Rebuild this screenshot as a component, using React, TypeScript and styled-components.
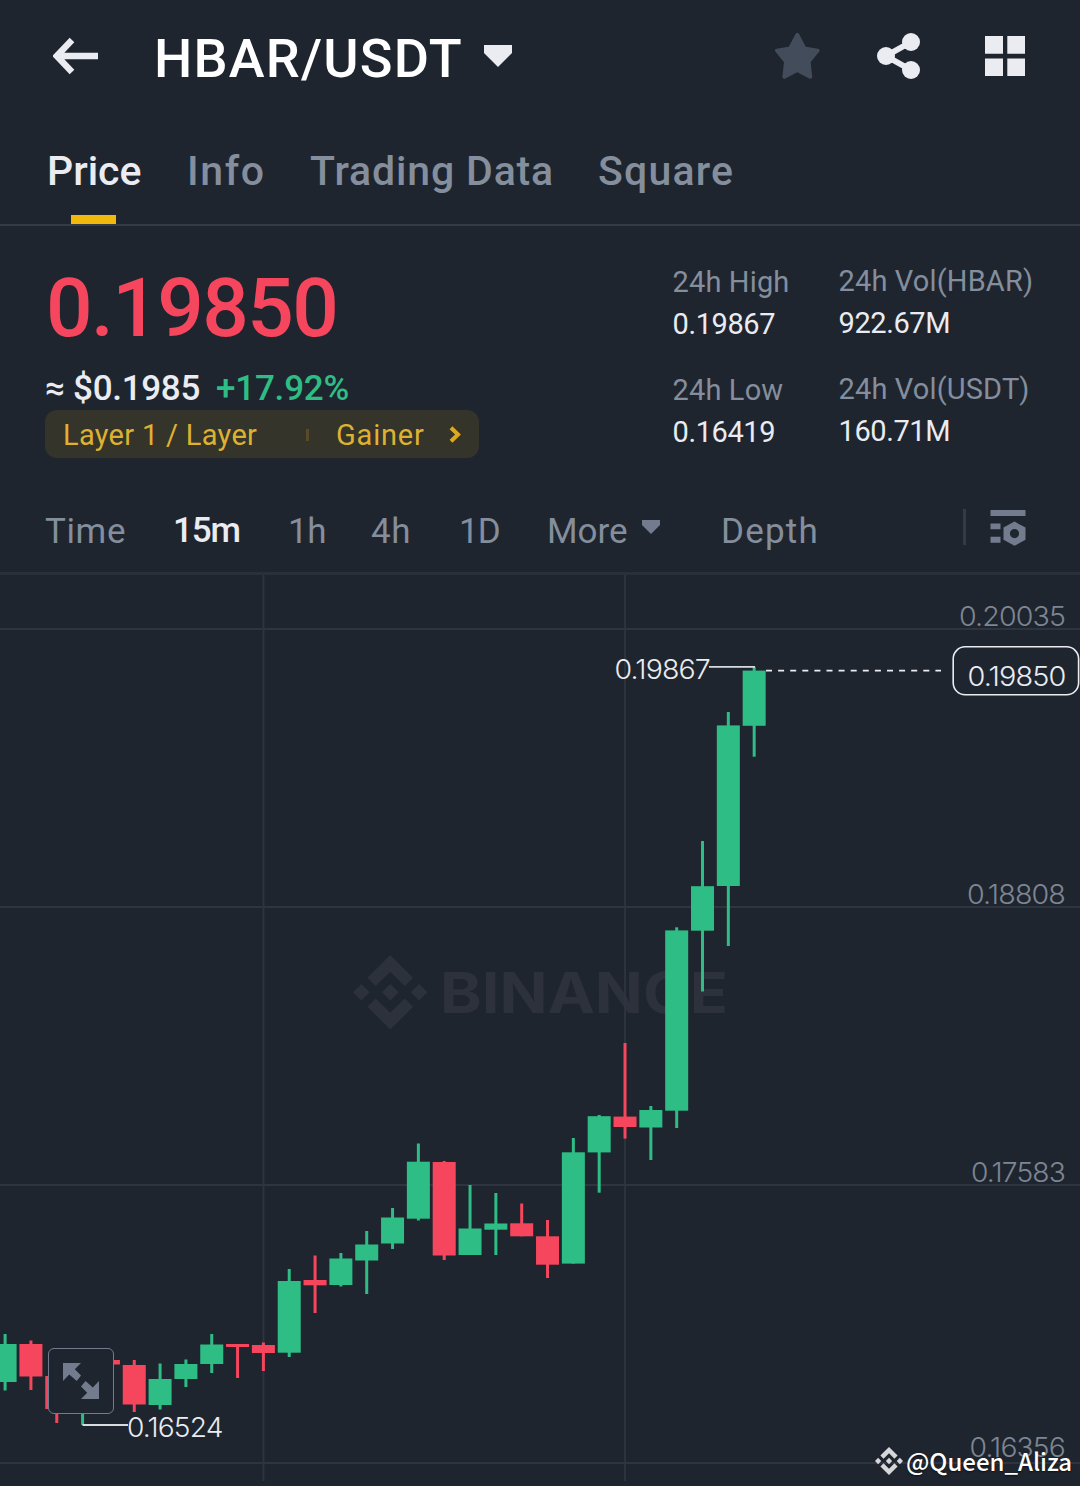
import React from "react";
import styled, { createGlobalStyle } from "styled-components";

const color = {
  bg: "#1f252f",
  line: "#333b47",
  grid: "#2e3541",
  text: "#eaecf1",
  muted: "#848e9c",
  icon: "#727c8e",
  up: "#2ebd85",
  down: "#f6465d",
  gold: "#f0b90b",
};

const Global = createGlobalStyle`
  * { box-sizing: border-box; }
  body {
    margin: 0;
    background: ${color.bg};
    font-family: Roboto, "Liberation Sans", sans-serif;
    -webkit-font-smoothing: antialiased;
  }
  svg { display: block; }
`;

const Page = styled.main`
  width: 1080px;
  height: 1486px;
  overflow: hidden;
  background: ${color.bg};
  color: ${color.text};
  white-space: nowrap;
`;

const Header = styled.header`
  display: flex;
  align-items: center;
  height: 112px;
  padding: 0 55px 0 53px;
`;

const Title = styled.h1`
  margin: 0 0 0 56px;
  padding-top: 5px;
  width: 330px;
  font-size: 54px;
  line-height: 64px;
  font-weight: 500;
  letter-spacing: 1.2px;
  color: #fff;
`;

const Actions = styled.div`
  display: flex;
  align-items: center;
  margin-left: auto;
`;

const ActionIcon = styled.span<{ $gap: number }>`
  margin-left: ${(p) => p.$gap}px;
`;

const Tabs = styled.nav`
  display: grid;
  grid-template-columns: 140px 123px 288px auto;
  height: 114px;
  padding: 35px 0 0 47px;
  border-bottom: 2px solid ${color.line};
`;

const Tab = styled.div<{ $active?: boolean; $spacing: number }>`
  font-size: 41px;
  line-height: 48px;
  font-weight: 500;
  letter-spacing: ${(p) => p.$spacing}px;
  color: ${(p) => (p.$active ? color.text : color.muted)};
`;

const Underline = styled.div`
  width: 45px;
  height: 9px;
  margin: 20px 0 0 24px;
  background: ${color.gold};
`;

const Summary = styled.section`
  display: grid;
  grid-template-columns: 627.5px 166px auto;
  height: 262px;
  padding-left: 45px;
`;

const PriceColumn = styled.div`
  padding-top: 40px;
`;

const Price = styled.div`
  padding-left: 1px;
  font-size: 82px;
  line-height: 84px;
  font-weight: 500;
  letter-spacing: -1.6px;
  color: ${color.down};
`;

const Conversion = styled.div`
  display: flex;
  gap: 17px;
  margin-top: 19px;
  font-size: 35px;
  line-height: 40px;
  font-weight: 500;
`;

const Fiat = styled.span`
  width: 154px;
  letter-spacing: -0.3px;
`;

const Change = styled.span`
  color: ${color.up};
  letter-spacing: -0.2px;
`;

const Chip = styled.div`
  display: flex;
  align-items: center;
  width: 434px;
  height: 48px;
  margin-top: 1px;
  padding: 1px 18px 0;
  border-radius: 12px;
  background: #35342b;
  color: #dfb131;
  font-size: 29px;
  line-height: 46px;
`;

const ChipCategory = styled.span`
  width: 243px;
  letter-spacing: 0.3px;
`;

const ChipDivider = styled.i`
  width: 3px;
  height: 12px;
  background: #594b2a;
`;

const ChipTag = styled.span`
  width: 114px;
  padding-left: 27px;
  letter-spacing: 0.8px;
`;

const StatColumn = styled.dl<{ $top: number }>`
  display: flex;
  flex-direction: column;
  gap: 24px;
  margin: 0;
  padding-top: ${(p) => p.$top}px;
`;

const StatLabel = styled.dt`
  font-size: 29px;
  line-height: 42px;
  letter-spacing: 0.15px;
  color: ${color.muted};
`;

const StatValue = styled.dd`
  margin: 0;
  font-size: 29px;
  line-height: 42px;
  letter-spacing: -0.4px;
`;

const Intervals = styled.nav`
  display: grid;
  grid-template-columns: 128px 115px 83px 88px 88px 174px 242px 27px auto;
  align-items: center;
  height: 87px;
  padding-left: 45px;
  border-bottom: 3px solid #2a303a;
`;

const Interval = styled.div<{ $active?: boolean; $spacing?: number }>`
  display: flex;
  align-items: center;
  gap: 14px;
  padding-top: ${(p) => (p.$active ? 2 : 3)}px;
  font-size: 35px;
  line-height: 40px;
  font-weight: ${(p) => (p.$active ? 500 : 400)};
  letter-spacing: ${(p) => p.$spacing ?? 0}px;
  color: ${(p) => (p.$active ? color.text : color.muted)};

  svg {
    margin-bottom: 9px;
  }
`;

const Separator = styled.i`
  width: 3px;
  height: 36px;
  margin-top: -6px;
  background: #343b47;
`;

const IntervalSettings = styled.div`
  margin-top: -5px;
`;

const ChartArea = styled.section`
  position: relative;
  height: 911px;
`;

const ChartLabel = styled.text`
  font-family: Inter, "Liberation Sans", sans-serif;
  font-size: 26.5px;
  font-weight: 300;
  letter-spacing: -0.8px;
`;

const BrandText = styled.text`
  font-family: Inter, "Liberation Sans", sans-serif;
  font-size: 57px;
  font-weight: 700;
  fill: #2d313c;
`;

const ExpandButton = styled.button`
  position: absolute;
  left: 48px;
  top: 773px;
  display: flex;
  align-items: center;
  justify-content: center;
  width: 66px;
  height: 66px;
  padding: 0;
  border: 1.5px solid ${color.icon};
  border-radius: 6px;
  background: ${color.bg};
`;

const Credit = styled.div`
  position: absolute;
  right: 8px;
  bottom: 5px;
  display: flex;
  align-items: center;
  gap: 3px;
  font-family: "Noto Sans CJK SC", sans-serif;
  font-size: 24px;
  line-height: 40px;
  font-weight: 500;
  color: #fff;
  text-shadow: 0 1px 2px rgba(0, 0, 0, 0.6);
`;

const BackArrow = () => (
  <svg width="45" height="38" viewBox="0 0 45 38">
    <path d="M19 3 3.8 19 19 35M3 19H45" fill="none" stroke={color.text} strokeWidth="6.4" />
  </svg>
);

const Caret = ({ w, h, fill }: { w: number; h: number; fill: string }) => (
  <svg width={w} height={h} viewBox="0 0 28 22" preserveAspectRatio="none">
    <path d="M0 0H28V8L14 22 0 8Z" fill={fill} />
  </svg>
);

const Star = () => (
  <svg width="45" height="46" viewBox="0 0 45 46">
    <path
      d="M22.3 2 29.4 15.4 42.6 17.6 33.6 28.6 35.2 43.8 22.3 37 9.4 43.8 11 28.6 2 17.6 15.2 15.4Z"
      fill="#434c5a"
      stroke="#434c5a"
      strokeWidth="4"
      strokeLinejoin="round"
    />
  </svg>
);

const Share = () => (
  <svg width="44" height="46" viewBox="0 0 44 46">
    <path d="M34 9 9 23 34 37" fill="none" stroke={color.text} strokeWidth="6" />
    <g fill={color.text}>
      <circle cx="34" cy="9" r="9" />
      <circle cx="9" cy="23" r="9" />
      <circle cx="34" cy="37" r="9" />
    </g>
  </svg>
);

const GridIcon = () => (
  <svg width="40" height="40" viewBox="0 0 40 40">
    <path d="M0 0H18V17.8H0ZM22.3 0H40V17.8H22.3ZM0 22.4H18V40H0ZM22.3 22.4H40V40H22.3Z" fill={color.text} />
  </svg>
);

const Chevron = () => (
  <svg width="12" height="17" viewBox="0 0 12 17">
    <path d="M2 1.8 9 8.5 2 15.2" fill="none" stroke="#e0a91c" strokeWidth="4" />
  </svg>
);

const SettingsIcon = () => (
  <svg width="36" height="37" viewBox="0 0 36 37">
    <path d="M.5 1H35.5V7H.5ZM.5 14.5H10.5V20.3H.5ZM.5 27.8H10.5V33.8H.5Z" fill={color.icon} />
    <path
      fillRule="evenodd"
      d="M24.5 12.6 35.5 18.4V30.8L24.5 36.8 13.5 30.8V18.4ZM24.5 20A4.6 4.6 0 1 0 24.5 29.2 4.6 4.6 0 1 0 24.5 20Z"
      fill={color.icon}
    />
  </svg>
);

const BrandMark = ({ x, y, size, fill }: { x?: number; y?: number; size: number; fill: string }) => (
  <svg x={x} y={y} width={size} height={size} viewBox="0 0 74 74">
    <path
      d="M37 0 59.7 22.5 51.4 30.8 37 16.6 22.6 30.8 14.3 22.5ZM37 74 14.3 51.5 22.6 43.2 37 57.4 51.4 43.2 59.7 51.5ZM8.3 28.7 16.6 37 8.3 45.3 0 37ZM65.7 28.7 74 37 65.7 45.3 57.4 37ZM37 28.7 45.3 37 37 45.3 28.7 37Z"
      fill={fill}
    />
  </svg>
);

const ExpandIcon = () => (
  <svg width="36" height="36" viewBox="0 0 36 36">
    <path
      d="M0 0H18L11.8 6.2 18 12.6 13.8 18 6.2 11.4 0 18ZM36 36H18L24.2 29.8 18 23.6 22.6 18 29.8 24.6 36 18Z"
      fill={color.icon}
    />
  </svg>
);

type Candle = [dir: 1 | 0, top: number, bottom: number, high: number, low: number];

const candles: Candle[] = [
  [1, 1344, 1382, 1334, 1390.5],
  [0, 1344, 1376.5, 1340.5, 1390],
  [0, 1376, 1409, 1376, 1423],
  [1, 1362, 1409, 1362, 1425],
  [0, 1360, 1364.5, 1360, 1364.5],
  [0, 1365, 1404.5, 1360, 1412],
  [1, 1379, 1405, 1363.5, 1409.5],
  [1, 1364, 1379, 1359.5, 1387],
  [1, 1344.5, 1364, 1334, 1373],
  [0, 1344, 1347, 1344, 1378],
  [0, 1345, 1353, 1342.5, 1371],
  [1, 1281, 1352.7, 1269, 1357],
  [0, 1280, 1285.3, 1255.5, 1313],
  [1, 1258.5, 1285, 1253, 1286.5],
  [1, 1244.5, 1260.5, 1231, 1294],
  [1, 1217.5, 1243.5, 1208, 1249],
  [1, 1161.7, 1218.7, 1143.5, 1220.5],
  [0, 1162, 1255.5, 1161, 1260],
  [1, 1228.5, 1255, 1185, 1255],
  [1, 1223.5, 1229.7, 1193, 1255],
  [0, 1223.3, 1236.3, 1203.5, 1236.3],
  [0, 1236.3, 1264.7, 1220, 1278],
  [1, 1152.3, 1263.6, 1138, 1263.6],
  [1, 1116.2, 1152.4, 1115, 1192.7],
  [0, 1116.6, 1127, 1043, 1138.6],
  [1, 1110, 1127.5, 1106, 1160],
  [1, 930.4, 1110.7, 927.3, 1128],
  [1, 886.2, 930.7, 841, 991.5],
  [1, 725.4, 886, 712, 946],
  [1, 670.6, 725.8, 667, 756.7],
];

const gridRows = [629, 907, 1185, 1463];
const gridCols = [263.5, 625];

const axisLabels = [
  { text: "0.20035", x: 959, width: 106, y: 626 },
  { text: "0.18808", x: 967, width: 98, y: 904 },
  { text: "0.17583", x: 971, width: 94, y: 1182 },
  { text: "0.16356", x: 969.5, width: 95.5, y: 1456.5 },
];

const Chart = () => (
  <svg width="1080" height="911" viewBox="0 575 1080 911">
    <BrandMark x={353} y={955} size={74.5} fill="#2d313c" />
    <BrandText x="440" y="1012.5" textLength="288" lengthAdjust="spacingAndGlyphs">
      BINANCE
    </BrandText>
    {gridRows.map((y) => (
      <line key={y} x1="0" x2="1080" y1={y} y2={y} stroke={color.grid} strokeWidth="2" />
    ))}
    {gridCols.map((x) => (
      <line key={x} x1={x} x2={x} y1="575" y2="1481" stroke={color.grid} strokeWidth="1.8" />
    ))}
    {candles.map(([up, top, bottom, high, low], i) => {
      const cx = 5.1 + i * 25.83;
      return (
        <g key={i} fill={up ? color.up : color.down}>
          <rect x={cx - 1.5} y={high} width="3" height={low - high} />
          <rect x={cx - 11.5} y={top} width="23" height={bottom - top} />
        </g>
      );
    })}
    {axisLabels.map((l) => (
      <ChartLabel key={l.text} x={l.x} y={l.y} textLength={l.width} lengthAdjust="spacingAndGlyphs" fill="#7d8693">
        {l.text}
      </ChartLabel>
    ))}
    <path d="M709 666.8H755" stroke="#d8dbe0" strokeWidth="1.8" />
    <ChartLabel x="614.5" y="679" textLength="95.5" lengthAdjust="spacingAndGlyphs" fill={color.text}>
      0.19867
    </ChartLabel>
    <path d="M766 670.6H941" stroke={color.text} strokeWidth="1.6" strokeDasharray="6 6.1" />
    <rect x="953.2" y="646.8" width="125.4" height="48" rx="12" fill={color.bg} stroke={color.text} strokeWidth="1.6" />
    <ChartLabel x="967.5" y="686" textLength="98" lengthAdjust="spacingAndGlyphs" fill={color.text}>
      0.19850
    </ChartLabel>
    <path d="M82.5 1425H128" stroke="#d8dbe0" strokeWidth="1.8" />
    <ChartLabel x="127" y="1437" textLength="95.5" lengthAdjust="spacingAndGlyphs" fill={color.text}>
      0.16524
    </ChartLabel>
  </svg>
);

const stats = [
  {
    top: 35,
    items: [
      { label: "24h High", value: "0.19867" },
      { label: "24h Low", value: "0.16419" },
    ],
  },
  {
    top: 34,
    items: [
      { label: "24h Vol(HBAR)", value: "922.67M" },
      { label: "24h Vol(USDT)", value: "160.71M" },
    ],
  },
];

export default function App() {
  return (
    <>
      <Global />
      <Page>
        <Header>
          <BackArrow />
          <Title>HBAR/USDT</Title>
          <Caret w={28} h={22} fill={color.text} />
          <Actions>
            <Star />
            <ActionIcon $gap={57}>
              <Share />
            </ActionIcon>
            <ActionIcon $gap={64}>
              <GridIcon />
            </ActionIcon>
          </Actions>
        </Header>

        <Tabs>
          <Tab $active $spacing={0}>
            Price
            <Underline />
          </Tab>
          <Tab $spacing={1.6}>Info</Tab>
          <Tab $spacing={0.85}>Trading Data</Tab>
          <Tab $spacing={1.2}>Square</Tab>
        </Tabs>

        <Summary>
          <PriceColumn>
            <Price>0.19850</Price>
            <Conversion>
              <Fiat>≈ $0.1985</Fiat>
              <Change>+17.92%</Change>
            </Conversion>
            <Chip>
              <ChipCategory>Layer 1 / Layer</ChipCategory>
              <ChipDivider />
              <ChipTag>Gainer</ChipTag>
              <ActionIcon $gap={26}>
                <Chevron />
              </ActionIcon>
            </Chip>
          </PriceColumn>
          {stats.map((column) => (
            <StatColumn key={column.top} $top={column.top}>
              {column.items.map((s) => (
                <div key={s.label}>
                  <StatLabel>{s.label}</StatLabel>
                  <StatValue>{s.value}</StatValue>
                </div>
              ))}
            </StatColumn>
          ))}
        </Summary>

        <Intervals>
          <Interval $spacing={0.6}>Time</Interval>
          <Interval $active $spacing={-1.2}>15m</Interval>
          <Interval $spacing={-0.5}>1h</Interval>
          <Interval $spacing={0.5}>4h</Interval>
          <Interval $spacing={-1}>1D</Interval>
          <Interval>
            More
            <Caret w={18} h={14} fill={color.icon} />
          </Interval>
          <Interval $spacing={1.2}>Depth</Interval>
          <Separator />
          <IntervalSettings>
            <SettingsIcon />
          </IntervalSettings>
        </Intervals>

        <ChartArea>
          <Chart />
          <ExpandButton aria-label="Expand chart">
            <ExpandIcon />
          </ExpandButton>
          <Credit>
            <BrandMark size={28} fill="#d6d7d9" />
            @Queen_Aliza
          </Credit>
        </ChartArea>
      </Page>
    </>
  );
}
